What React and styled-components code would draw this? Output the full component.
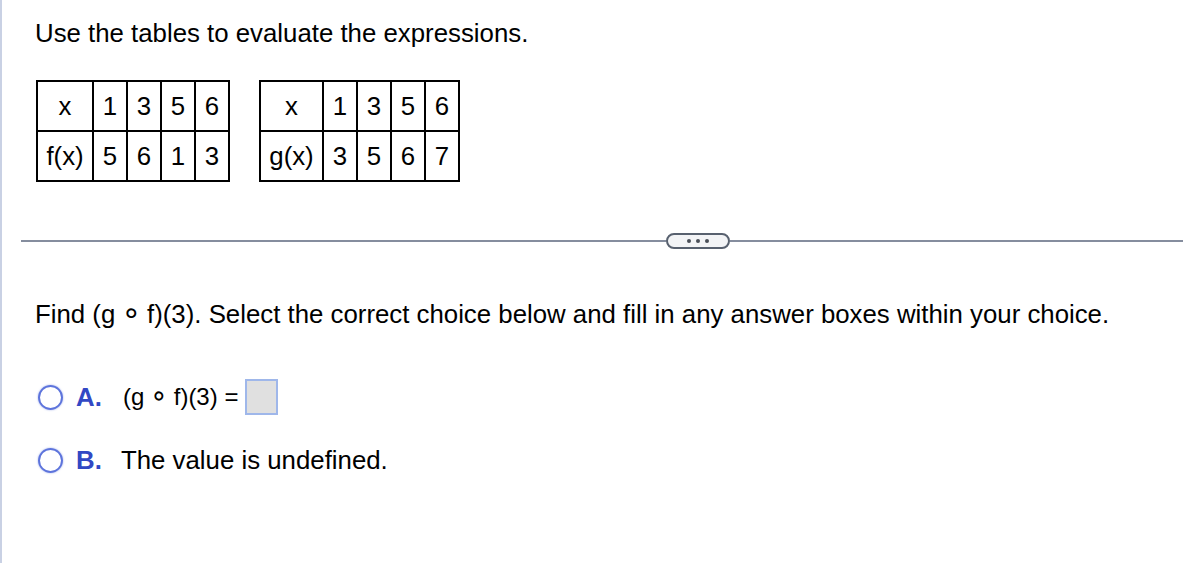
import React from 'react';
import styled, { createGlobalStyle } from 'styled-components';

const GlobalStyle = createGlobalStyle`
  html, body {
    margin: 0;
    padding: 0;
    background: #ffffff;
  }
  body {
    font-family: "Liberation Sans", Arial, sans-serif;
    color: #000;
  }
`;

const Page = styled.div`
  min-height: 563px;
  border-left: 2px solid #c9d1e4;
  box-sizing: border-box;
  padding-top: 18px;
  overflow: hidden;
`;

const Prompt = styled.p`
  margin: 0;
  padding-left: 33px;
  font-size: 25.8px;
  line-height: 30px;
`;

const Tables = styled.div`
  display: flex;
  gap: 29px;
  padding-left: 34px;
  margin-top: 32px;
`;

const Table = styled.table`
  border-collapse: collapse;
  border: 2px solid #000;
  font-size: 25.8px;
  table-layout: fixed;
`;

const Cell = styled.td`
  border: 2px solid #000;
  height: 48px;
  width: ${p => (p.$w ? `${p.$w}px` : '32px')};
  padding: 0;
  text-align: center;
  vertical-align: middle;
  white-space: nowrap;
`;

const Ring = styled.span`
  font-family: "DejaVu Sans", sans-serif;
  font-size: 1.2em;
  line-height: 0;
  margin: 0 -1px;
`;

const DividerRow = styled.div`
  display: flex;
  align-items: center;
  margin-top: 51px;
  margin-left: 19px;
`;

const Line = styled.div`
  height: 2px;
  background: #858d9e;
  flex: ${p => (p.$grow ? '1' : `0 0 ${p.$w}px`)};
`;

const Pill = styled.div`
  width: 64px;
  height: 16px;
  box-sizing: border-box;
  border: 2px solid #58616f;
  border-radius: 9px;
  background: #f3f4f6;
  display: flex;
  align-items: center;
  justify-content: center;
  gap: 5px;
`;

const Dot = styled.span`
  width: 4px;
  height: 4px;
  border-radius: 50%;
  background: #4a4f58;
`;

const Question = styled.p`
  margin: 50px 0 0;
  padding-left: 33px;
  font-size: 25.8px;
  line-height: 30px;
  white-space: nowrap;
`;

const Choices = styled.div`
  margin-top: 49px;
  padding-left: 36px;
  display: flex;
  flex-direction: column;
  gap: 25px;
`;

const Choice = styled.div`
  display: flex;
  align-items: center;
  height: 38px;
`;

const Radio = styled.span`
  width: 21px;
  height: 21px;
  border-radius: 50%;
  border: 2px solid #5d74dc;
  box-shadow: 0 0 2px rgba(93, 116, 220, 0.6);
  flex: 0 0 auto;
`;

const Letter = styled.span`
  color: #3248c4;
  font-weight: 700;
  font-size: 25.8px;
  width: 45px;
  margin-left: 13px;
`;

const Expr = styled.span`
  font-size: 24px;
  display: flex;
  align-items: center;
  gap: 7px;
  padding-left: 2px;
`;

const AnswerBox = styled.span`
  width: 33px;
  height: 36px;
  box-sizing: border-box;
  border: 2px solid #9fb7ea;
  background: #e0e0e0;
`;

const ChoiceText = styled.span`
  font-size: 25.8px;
`;

const FnTable = ({ name, headW, xs, ys }) => (
  <Table>
    <tbody>
      <tr>
        <Cell $w={headW}>x</Cell>
        {xs.map((v, i) => <Cell key={i}>{v}</Cell>)}
      </tr>
      <tr>
        <Cell $w={headW}>{name}</Cell>
        {ys.map((v, i) => <Cell key={i}>{v}</Cell>)}
      </tr>
    </tbody>
  </Table>
);

export default function App() {
  return (
    <>
      <GlobalStyle />
      <Page>
        <Prompt>Use the tables to evaluate the expressions.</Prompt>
        <Tables>
          <FnTable name="f(x)" headW={54} xs={[1, 3, 5, 6]} ys={[5, 6, 1, 3]} />
          <FnTable name="g(x)" headW={61} xs={[1, 3, 5, 6]} ys={[3, 5, 6, 7]} />
        </Tables>
        <DividerRow>
          <Line $w={645} />
          <Pill><Dot /><Dot /><Dot /></Pill>
          <Line $grow />
        </DividerRow>
        <Question>
          Find (g <Ring>∘</Ring> f)(3). Select the correct choice below and fill in any answer boxes within your choice.
        </Question>
        <Choices>
          <Choice>
            <Radio />
            <Letter>A.</Letter>
            <Expr><span>(g <Ring>∘</Ring> f)(3) =</span><AnswerBox /></Expr>
          </Choice>
          <Choice>
            <Radio />
            <Letter>B.</Letter>
            <ChoiceText>The value is undefined.</ChoiceText>
          </Choice>
        </Choices>
      </Page>
    </>
  );
}
